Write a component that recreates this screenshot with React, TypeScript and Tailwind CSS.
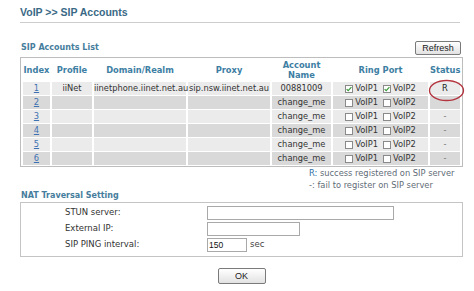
import React from "react";

const dv = { fontFamily: '"DejaVu Sans", Verdana, sans-serif' };
const lib = { fontFamily: '"Liberation Sans", Arial, sans-serif' };

function Box({ checked }: { checked?: boolean }) {
  return (
    <svg width="8" height="8" viewBox="0 0 8 8" className="shrink-0">
      <rect x="0.5" y="0.5" width="7" height="7" fill="#fff" stroke="#8a8a8a" />
      {checked && (
        <path d="M1.6 4.1 L3.2 5.7 L6.4 2.2" fill="none" stroke="#3b9a3b" strokeWidth="1.2" />
      )}
    </svg>
  );
}

const rows = [
  { i: "1", p: "iiNet", d: "iinetphone.iinet.net.au", x: "sip.nsw.iinet.net.au", a: "00881009", c: true, s: "R" },
  { i: "2", p: "", d: "", x: "", a: "change_me", c: false, s: "" },
  { i: "3", p: "", d: "", x: "", a: "change_me", c: false, s: "-" },
  { i: "4", p: "", d: "", x: "", a: "change_me", c: false, s: "-" },
  { i: "5", p: "", d: "", x: "", a: "change_me", c: false, s: "-" },
  { i: "6", p: "", d: "", x: "", a: "change_me", c: false, s: "-" },
];

export default function App() {
  return (
    <div className="w-[474px] h-[291px] bg-white overflow-hidden">
      <div className="ml-[20px] w-[443px] flex flex-col">
        <div
          className="mt-[6px] h-[12px] leading-[12px] text-[10.5px] font-bold text-[#3a6986]"
          style={lib}
        >
          VoIP &gt;&gt; SIP Accounts
        </div>
        <div className="mt-[4px] w-[440px] border-t border-[#cdcdcd]" />

        <div className="mt-[18px] h-[14px] flex items-center justify-between">
          <div className="ml-[1px] text-[8px] font-bold text-[#467d9c]" style={dv}>
            SIP Accounts List
          </div>
          <button
            className="mr-[2px] w-[46px] h-[14px] border border-[#7a7a7a] rounded-[2px] bg-gradient-to-b from-white to-[#e2e2e2] text-[9px] leading-[12px] text-[#222]"
            style={lib}
          >
            Refresh
          </button>
        </div>

        <table
          className="mt-[2px] w-[443px] table-fixed border border-[#bdbdbd] [border-spacing:2px_1px] border-separate text-[8.3px] text-[#333]"
          style={dv}
        >
          <colgroup>
            <col className="w-[27px]" />
            <col className="w-[40px]" />
            <col className="w-[92px]" />
            <col className="w-[82px]" />
            <col className="w-[59px]" />
            <col className="w-[95px]" />
            <col className="w-[30px]" />
          </colgroup>
          <thead>
            <tr className="h-[22px] font-bold text-[#3d7ea3] leading-[10px]">
              <th className="font-bold p-0">Index</th>
              <th className="font-bold p-0">Profile</th>
              <th className="font-bold p-0">Domain/Realm</th>
              <th className="font-bold p-0">Proxy</th>
              <th className="font-bold p-0">
                Account
                <br />
                Name
              </th>
              <th className="font-bold p-0">Ring Port</th>
              <th className="font-bold p-0">Status</th>
            </tr>
          </thead>
          <tbody>
            {rows.map((r, k) => (
              <tr
                key={r.i}
                className={
                  "h-[13px] leading-[13px] " + (k % 2 === 0 ? "bg-[#ebebeb]" : "bg-[#d9d9d9]")
                }
              >
                <td className="p-0 text-center">
                  <span className="underline text-[#3f72b3]">{r.i}</span>
                </td>
                <td className="p-0 text-center">{r.p}</td>
                <td className="p-0 text-center whitespace-nowrap overflow-visible">{r.d}</td>
                <td className="p-0 text-center whitespace-nowrap overflow-visible">{r.x}</td>
                <td className="p-0 text-center">{r.a}</td>
                <td className="p-0">
                  <div className="flex items-center justify-center gap-[2px]">
                    <Box checked={r.c} />
                    <span className="mr-[3px]">VoIP1</span>
                    <Box checked={r.c} />
                    <span>VoIP2</span>
                  </div>
                </td>
                <td className={"p-0 text-center relative " + (r.s === "-" ? "text-[#777]" : "text-[#222]")}>
                  {r.s}
                  {k === 0 && (
                    <svg
                      width="38"
                      height="24"
                      viewBox="0 0 38 24"
                      className="absolute left-[-2px] top-[-3px] pointer-events-none"
                    >
                      <ellipse cx="18.5" cy="11.5" rx="17" ry="10" fill="none" stroke="#b3343f" strokeWidth="1.3" />
                    </svg>
                  )}
                </td>
              </tr>
            ))}
          </tbody>
        </table>

        <div className="flex justify-end pr-[2px]">
          <div className="w-[152px] text-[8.3px] leading-[12px] text-[#5f6d77]" style={dv}>
            <div className="whitespace-nowrap">
              <span className="text-[#2f70a4]">R:</span> success registered on SIP server
            </div>
            <div className="whitespace-nowrap">-: fail to register on SIP server</div>
          </div>
        </div>

        <div className="ml-[1px] h-[10px] leading-[10px] text-[8px] font-bold text-[#467d9c]" style={dv}>
          NAT Traversal Setting
        </div>

        <div className="mt-[1px] w-[443px] border border-[#c4c4c4] pt-[2px] pb-[4px] flex flex-col gap-[1px]">
          {[
            { l: "STUN server:", w: "w-[187px]", v: "" },
            { l: "External IP:", w: "w-[93px]", v: "" },
            { l: "SIP PING interval:", w: "w-[40px]", v: "150" },
          ].map((f) => (
            <div key={f.l} className="h-[15px] flex items-center">
              <div className="ml-[44px] w-[142px] text-[8.5px] text-[#333]" style={dv}>
                {f.l}
              </div>
              <div
                className={
                  f.w +
                  " h-[14px] border border-[#a9a9a9] bg-white text-[8.5px] leading-[12px] pl-[1px] text-[#111]"
                }
                style={lib}
              >
                {f.v}
              </div>
              {f.v && (
                <span className="ml-[3px] text-[8.5px] text-[#444]" style={dv}>
                  sec
                </span>
              )}
            </div>
          ))}
        </div>

        <div className="mt-[11px] flex justify-center">
          <button
            className="w-[48px] h-[16px] border border-[#7a7a7a] rounded-[2px] bg-gradient-to-b from-white to-[#e2e2e2] text-[9px] leading-[14px] text-[#222]"
            style={lib}
          >
            OK
          </button>
        </div>
      </div>
    </div>
  );
}
